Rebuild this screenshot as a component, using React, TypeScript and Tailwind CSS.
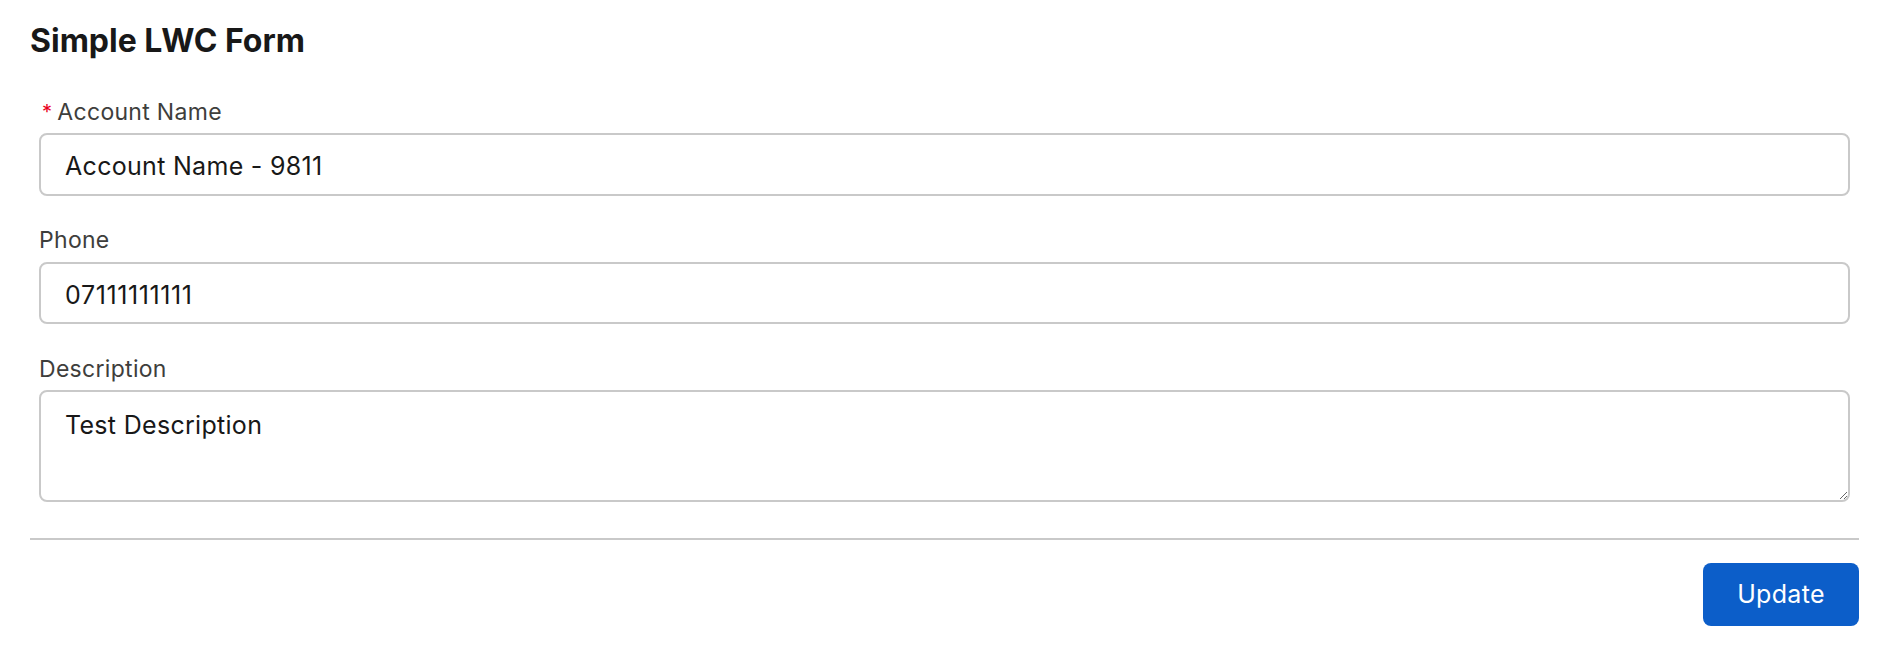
import React from 'react';

const font = { fontFamily: 'Inter, "Noto Sans", sans-serif' };

const Label: React.FC<{ text: string; required?: boolean }> = ({ text, required }) => (
  <div className="flex items-center text-[23px] leading-[28px] tracking-[0.3px] text-[#3e3e3c]">
    {required && <span className="text-[#ea001e] mr-[5px] ml-[3px] text-[20px]">*</span>}
    <span>{text}</span>
  </div>
);

const App: React.FC = () => {
  return (
    <div className="w-[1886px] h-[668px] bg-white text-[#181818] pl-[30px] pr-[27px] pt-[21px]" style={font}>
      <h1 className="text-[32px] leading-[40px] font-bold text-[#181818]">Simple LWC Form</h1>

      <div className="px-[9px] pt-[37px]">
        <Label text="Account Name" required />
        <input
          readOnly
          defaultValue="Account Name - 9811"
          className="mt-[7px] w-full h-[63px] border-2 border-[#c9c9c9] rounded-[8px] pl-[24px] pt-[3px] text-[25px] tracking-[0.3px] text-[#181818] outline-none"
          style={font}
        />

        <div className="mt-[30px]">
          <Label text="Phone" />
        </div>
        <input
          readOnly
          defaultValue="07111111111"
          className="mt-[8px] w-full h-[62px] border-2 border-[#c9c9c9] rounded-[8px] pl-[24px] pt-[3px] text-[25px] tracking-[0.6px] text-[#181818] outline-none"
          style={font}
        />

        <div className="mt-[31px]">
          <Label text="Description" />
        </div>
        <textarea
          readOnly
          defaultValue="Test Description"
          className="block mt-[7px] w-full h-[112px] border-2 border-[#c9c9c9] rounded-[8px] pl-[24px] pt-[17px] text-[25px] leading-[32px] tracking-[0.3px] text-[#181818] outline-none"
          style={font}
        />
      </div>

      <div className="mt-[36px] h-[2px] bg-[#c9c9c9]" />

      <div className="flex justify-end pt-[23px]">
        <button className="w-[156px] h-[63px] rounded-[8px] bg-[#0c5ec9] text-white text-[25px] tracking-[0.3px]" style={font}>
          Update
        </button>
      </div>
    </div>
  );
};

export default App;
